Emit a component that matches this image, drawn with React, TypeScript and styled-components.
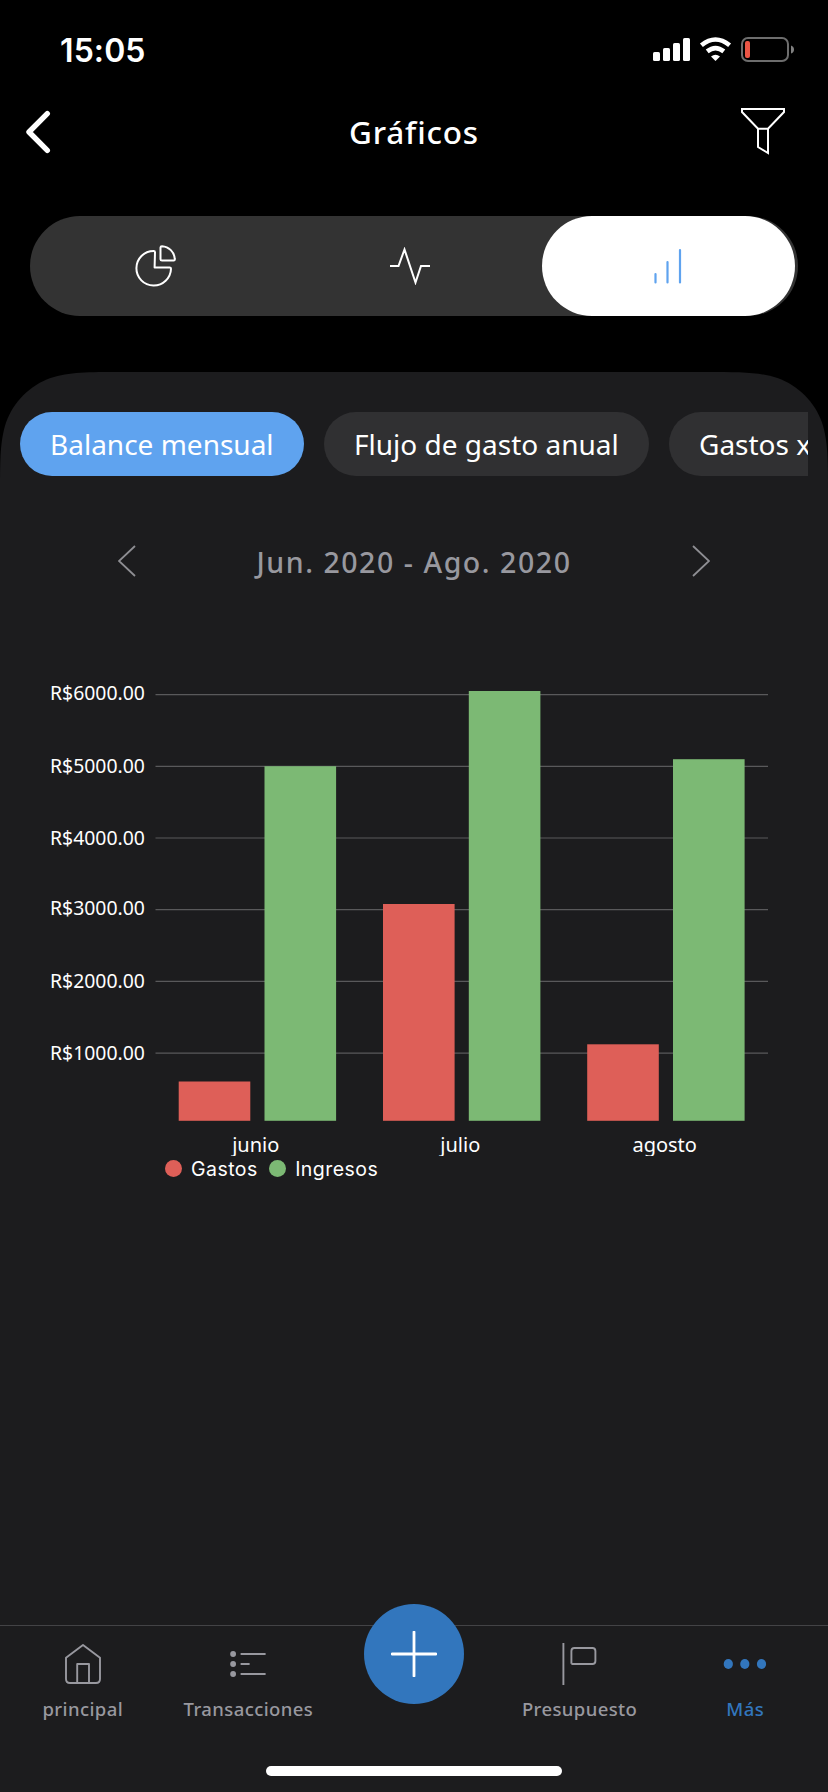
import React from "react";
import styled, { createGlobalStyle } from "styled-components";

const GlobalStyle = createGlobalStyle`
  * { box-sizing: border-box; }
  body { margin: 0; background: #000; }
  svg { display: block; flex: none; }
`;

const fonts = {
  ui: `"Noto Sans", "Liberation Sans", sans-serif`,
  system: `Inter, "Liberation Sans", sans-serif`,
};

const colors = {
  panel: "#1c1c1e",
  chip: "#303032",
  muted: "#98989f",
  blue: "#5fa3ef",
  deepBlue: "#3276bd",
  red: "#de5f58",
  green: "#7cb974",
};

const Screen = styled.div`
  width: 828px;
  height: 1792px;
  display: flex;
  flex-direction: column;
  overflow: hidden;
  background: #000;
  color: #fff;
  font-family: ${fonts.ui};
`;

const StatusBar = styled.div`
  height: 88px;
  display: flex;
  align-items: center;
  justify-content: space-between;
  padding: 12px 34px 0 60px;
`;

const Clock = styled.span`
  padding-top: 1px;
  font: 600 32px/40px ${fonts.system};
  letter-spacing: 0.1px;
`;

const Header = styled.header`
  height: 88px;
  display: grid;
  grid-template-columns: 200px 1fr 200px;
  align-items: center;
`;

const HeaderSide = styled.div<{ $end?: boolean }>`
  display: flex;
  justify-content: ${(p) => (p.$end ? "flex-end" : "flex-start")};
  padding: ${(p) => (p.$end ? "0 42px 0 0" : "0 0 0 24px")};
`;

const Title = styled.h1`
  margin: 0;
  text-align: center;
  font-size: 31.5px;
  line-height: 40px;
  font-weight: 500;
  letter-spacing: 0.8px;
`;

const Segmented = styled.div`
  height: 100px;
  flex: none;
  margin: 40px 30px 56px;
  padding-right: 3px;
  display: grid;
  grid-template-columns: 252px 260px 253px;
  border-radius: 50px;
  background: #333;
`;

const Segment = styled.button<{ $active?: boolean }>`
  border: 0;
  padding: 0;
  display: flex;
  align-items: center;
  justify-content: center;
  border-radius: 50px;
  background: ${(p) => (p.$active ? "#fff" : "transparent")};
`;

const Panel = styled.main`
  flex: 1;
  display: flex;
  flex-direction: column;
  background: ${colors.panel};
  clip-path: path("M0 1420 V122.3 C0 87.1 0 69.5 6 50.5 C13.5 29.8 29.8 13.5 50.5 6 C69.5 0 87.1 0 122.3 0 H705.7 C740.9 0 758.5 0 777.5 6 C798.2 13.5 814.5 29.8 822 50.5 C828 69.5 828 87.1 828 122.3 V1420 Z");
`;

const Chips = styled.div`
  margin: 40px 20px 0;
  display: flex;
  gap: 20px;
  overflow: hidden;
`;

const Chip = styled.button<{ $active?: boolean; $width: number }>`
  flex: none;
  width: ${(p) => p.$width}px;
  height: 64px;
  border: 0;
  border-radius: 32px;
  padding: 0 0 0 30px;
  text-align: left;
  white-space: nowrap;
  color: #fff;
  background: ${(p) => (p.$active ? colors.blue : colors.chip)};
  font: 400 28px/64px ${fonts.ui};
`;

const Period = styled.div`
  height: 60px;
  margin: 55px 118px 0;
  display: flex;
  align-items: center;
  justify-content: space-between;
  color: ${colors.muted};
  font-size: 28.5px;
  font-weight: 500;
  letter-spacing: 1.55px;
`;

const PeriodLabel = styled.span`
  padding-top: 2px;
`;

const Chart = styled.svg`
  margin-top: 69px;
`;

const Legend = styled.div`
  height: 24px;
  margin-left: 165px;
  display: flex;
  align-items: center;
  gap: 11.5px;
  font: 400 19.5px/24px ${fonts.system};
  letter-spacing: 0.45px;
`;

const LegendItem = styled.div`
  display: flex;
  align-items: center;
  gap: 9px;
`;

const LegendLabel = styled.span`
  padding-top: 2px;
`;

const Dot = styled.i<{ $color: string }>`
  width: 17px;
  height: 17px;
  border-radius: 50%;
  background: ${(p) => p.$color};
`;

const TabBar = styled.nav`
  height: 167px;
  margin-top: auto;
  border-top: 1px solid #434346;
  display: flex;
  flex-direction: column;
  justify-content: space-between;
  align-items: center;
  padding-bottom: 16px;
`;

const Tabs = styled.div`
  width: 100%;
  display: grid;
  grid-template-columns: repeat(5, 1fr);
`;

const Tab = styled.div<{ $active?: boolean }>`
  display: flex;
  flex-direction: column;
  align-items: center;
  padding-top: 16px;
  color: ${(p) => (p.$active ? colors.deepBlue : colors.muted)};
`;

const TabLabel = styled.span`
  margin-top: 11px;
  white-space: nowrap;
  font-size: 18.5px;
  line-height: 24px;
  font-weight: 500;
  letter-spacing: 0.4px;
`;

const AddButton = styled.button`
  width: 100px;
  height: 100px;
  margin: -22px auto 0;
  border: 0;
  padding: 0;
  border-radius: 50%;
  display: grid;
  place-items: center;
  background: ${colors.deepBlue};
`;

const HomeIndicator = styled.div`
  width: 296px;
  height: 10px;
  border-radius: 5px;
  background: #fff;
`;

const StatusIcons = () => (
  <svg width="142" height="26" viewBox="652 37 142 26">
    <g fill="#fff">
      <rect x="653" y="52" width="7" height="9" rx="1.6" />
      <rect x="663" y="48" width="7" height="13" rx="1.6" />
      <rect x="673" y="43" width="7" height="18" rx="1.6" />
      <rect x="683" y="38" width="7" height="23" rx="1.6" />
      <path d="M715.5 61 L711 56.6 Q715.5 52.9 720 56.6 Z" />
    </g>
    <g fill="none" stroke="#fff" strokeWidth="4.6">
      <path d="M701.4 45.2 Q715.5 33.8 729.6 45.2" />
      <path d="M707.2 51.4 Q715.5 44.8 723.8 51.4" />
    </g>
    <rect x="742" y="38" width="46" height="23" rx="6" fill="none" stroke="#6d6d6d" strokeWidth="2" />
    <path d="M791 45.5 q3 1 3 4 t-3 4z" fill="#808080" />
    <rect x="745" y="41" width="5" height="17" rx="2" fill="#ea5545" />
  </svg>
);

const BackIcon = () => (
  <svg width="28" height="44" viewBox="24 110 28 44">
    <path d="M47.3 113.6 L29 132 L47.3 150.4" fill="none" stroke="#fff" strokeWidth="5.4" strokeLinecap="round" strokeLinejoin="round" />
  </svg>
);

const FunnelIcon = () => (
  <svg width="46" height="50" viewBox="740 107 46 50">
    <path d="M742 109 H784 V112 L768 128.8 H758 L742 112 Z M758 128.8 V147 L768 153 V128.8" fill="none" stroke="#fff" strokeWidth="2" />
  </svg>
);

const PieIcon = () => (
  <svg width="44" height="44" viewBox="134 244 44 44">
    <g fill="none" stroke="#fff" strokeWidth="2" strokeLinejoin="round">
      <path d="M155 252.2 Q155 251 153.6 251 A17.3 17.3 0 1 0 171 268.8 Q171 267.5 169.6 267.5 H154.6 Z" />
      <path d="M160.5 247.5 Q160.5 246.2 162 246.2 A13.6 13.6 0 0 1 174.8 259 Q175 260.5 173.6 260.5 H162 Q160.5 260.5 160.5 259.2 Z" />
    </g>
  </svg>
);

const PulseIcon = () => (
  <svg width="46" height="38" viewBox="389 247 46 38">
    <path d="M390 266 H398.5 L404.5 249.5 L415.5 282.5 L421 266 H430" fill="none" stroke="#fff" strokeWidth="2" />
  </svg>
);

const BarsIcon = () => (
  <svg width="36" height="36" viewBox="650.5 248 36 36">
    <path d="M655 274 V282.5 M667 262 V282.5 M679.5 250 V282.5" stroke={colors.blue} strokeWidth="2.2" strokeLinecap="round" />
  </svg>
);

const Chevron = ({ right }: { right?: boolean }) => (
  <svg width="18" height="32" viewBox="0 0 18 32">
    <path d={right ? "M1 1 L17 16 L1 31" : "M17 1 L1 16 L17 31"} fill="none" stroke="#8e8e93" strokeWidth="1.8" />
  </svg>
);

const HomeIcon = () => (
  <svg width="44" height="44" viewBox="61 1642 44 44">
    <path d="M83 1645 L100 1657.8 V1679 Q100 1683 96 1683 H70 Q66 1683 66 1679 V1657.8 Z M77.2 1683 V1664 H89 V1683" fill="none" stroke="currentColor" strokeWidth="1.9" strokeLinejoin="round" />
  </svg>
);

const ListIcon = () => (
  <svg width="44" height="44" viewBox="226.4 1642 44 44">
    {[1654, 1664, 1674].map((y) => (
      <g key={y}>
        <circle cx="233.5" cy={y} r="2.9" fill="currentColor" />
        <path d={`M241 ${y} H${y === 1664 ? 250 : 266}`} stroke="currentColor" strokeWidth="2" />
      </g>
    ))}
  </svg>
);

const FlagIcon = () => (
  <svg width="44" height="44" viewBox="557.6 1642 44 44">
    <path d="M563 1643 V1685 M571 1663.8 V1651 Q571 1648 574 1648 H592 Q595 1648 595 1651 V1661 Q595 1664 592 1664 H571" fill="none" stroke="currentColor" strokeWidth="1.9" />
  </svg>
);

const MoreIcon = () => (
  <svg width="44" height="44" viewBox="722 1642 44 44">
    {[727.3, 743.8, 760.5].map((x) => (
      <ellipse key={x} cx={x} cy="1664" rx="4.6" ry="5" fill="currentColor" />
    ))}
  </svg>
);

const ticks = [6000, 5000, 4000, 3000, 2000, 1000];

const months = [
  { name: "junio", x: 178.7, center: 255.7, expenseTop: 1081.5, incomeTop: 766.2 },
  { name: "julio", x: 383, center: 460.3, expenseTop: 904, incomeTop: 691 },
  { name: "agosto", x: 587.2, center: 664.7, expenseTop: 1044.3, incomeTop: 759.2 },
];

const BalanceChart = () => (
  <Chart width="828" height="496" viewBox="0 660 828 496" fontFamily={fonts.ui}>
    {ticks.map((value, i) => {
      const y = 694.6 + i * 71.7;
      return (
        <g key={value}>
          <path d={`M155.5 ${y} H768`} stroke="#59595b" strokeWidth="1.2" />
          <text x="50" y={[700, 773, 845, 915, 988, 1060][i]} fill="#fff" fontSize="19.4">
            {`R$${value}.00`}
          </text>
        </g>
      );
    })}
    {months.map((m) => (
      <g key={m.name}>
        <rect x={m.x} y={m.expenseTop} width="71.6" height={1120.8 - m.expenseTop} fill={colors.red} />
        <rect x={m.x + 85.8} y={m.incomeTop} width="71.6" height={1120.8 - m.incomeTop} fill={colors.green} />
        <text x={m.center} y="1152" fill="#fff" fontSize="20" textAnchor="middle">
          {m.name}
        </text>
      </g>
    ))}
  </Chart>
);

export default function App() {
  return (
    <Screen>
      <GlobalStyle />
      <StatusBar>
        <Clock>15:05</Clock>
        <StatusIcons />
      </StatusBar>
      <Header>
        <HeaderSide>
          <BackIcon />
        </HeaderSide>
        <Title>Gráficos</Title>
        <HeaderSide $end>
          <FunnelIcon />
        </HeaderSide>
      </Header>
      <Segmented>
        <Segment aria-label="Circular">
          <PieIcon />
        </Segment>
        <Segment aria-label="Línea">
          <PulseIcon />
        </Segment>
        <Segment $active aria-label="Barras">
          <BarsIcon />
        </Segment>
      </Segmented>
      <Panel>
        <Chips>
          <Chip $active $width={284}>Balance mensual</Chip>
          <Chip $width={325}>Flujo de gasto anual</Chip>
          <Chip $width={325}>Gastos x categoría</Chip>
        </Chips>
        <Period>
          <Chevron />
          <PeriodLabel>Jun. 2020 - Ago. 2020</PeriodLabel>
          <Chevron right />
        </Period>
        <BalanceChart />
        <Legend>
          <LegendItem>
            <Dot $color={colors.red} />
            <LegendLabel>Gastos</LegendLabel>
          </LegendItem>
          <LegendItem>
            <Dot $color={colors.green} />
            <LegendLabel>Ingresos</LegendLabel>
          </LegendItem>
        </Legend>
        <TabBar>
          <Tabs>
            <Tab>
              <HomeIcon />
              <TabLabel>principal</TabLabel>
            </Tab>
            <Tab>
              <ListIcon />
              <TabLabel>Transacciones</TabLabel>
            </Tab>
            <AddButton aria-label="Añadir">
              <svg width="46" height="46" viewBox="0 0 46 46">
                <path d="M23 1 V45 M1 23 H45" stroke="#fff" strokeWidth="2.8" strokeLinecap="round" />
              </svg>
            </AddButton>
            <Tab>
              <FlagIcon />
              <TabLabel>Presupuesto</TabLabel>
            </Tab>
            <Tab $active>
              <MoreIcon />
              <TabLabel>Más</TabLabel>
            </Tab>
          </Tabs>
          <HomeIndicator />
        </TabBar>
      </Panel>
    </Screen>
  );
}
